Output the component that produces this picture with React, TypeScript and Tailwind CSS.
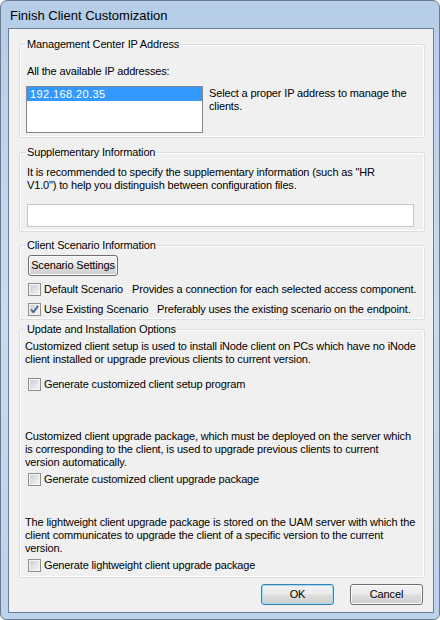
import type { ReactNode } from 'react';

function Group({ title, children, className = '' }: { title: string; children: ReactNode; className?: string }) {
  return (
    <fieldset
      className={`rounded-[3px] border border-[#d5dfe5] px-[6px] shadow-[inset_0_0_0_1px_#ffffff] ${className}`}
    >
      <legend className="ml-[0px] px-[1px] leading-[13px]">{title}</legend>
      {children}
    </fieldset>
  );
}

function Checkbox({ checked = false }: { checked?: boolean }) {
  return (
    <span className="flex h-[13px] w-[13px] shrink-0 items-center justify-center border border-[#8e8f8f] bg-gradient-to-br from-[#c9cdd2] to-[#f6f6f6] shadow-[inset_0_0_0_1px_#f4f4f4]">
      {checked && (
        <svg width="11" height="11" viewBox="0 0 11 11">
          <path d="M2 5.5 L4.3 8.2 L9 2" fill="none" stroke="#4a5f8f" strokeWidth="1.8" strokeLinejoin="round" />
        </svg>
      )}
    </span>
  );
}

function CheckRow({ label, checked, labelWidth, desc }: { label: string; checked?: boolean; labelWidth?: string; desc?: string }) {
  return (
    <div className="ml-[2px] flex h-[20px] items-center whitespace-nowrap">
      <Checkbox checked={checked} />
      <span className={`ml-[3px] ${labelWidth ?? ''}`}>{label}</span>
      {desc && <span>{desc}</span>}
    </div>
  );
}

function WinButton({ children, isDefault = false }: { children: ReactNode; isDefault?: boolean }) {
  return (
    <button
      className={`h-[21px] w-[73px] rounded-[3px] border bg-[linear-gradient(#f2f2f2,#ebebeb_48%,#dddddd_52%,#cfcfcf)] text-center leading-[19px] ${
        isDefault
          ? 'border-[#3c7fb1] shadow-[inset_0_0_0_1px_#9fdcf6]'
          : 'border-[#707070] shadow-[inset_0_0_0_1px_#fbfbfb]'
      }`}
    >
      {children}
    </button>
  );
}

export default function App() {
  return (
    <div
      className="flex h-[620px] w-[440px] flex-col overflow-hidden rounded-t-[7px] rounded-b-[6px] border border-[#6b7a8d] bg-gradient-to-b from-[#b6cde8] via-[#c9dbef] to-[#bcd1ea] text-[11px] leading-[13px] tracking-[-0.15px] text-black"
      style={{ fontFamily: '"Liberation Sans", Arial, sans-serif' }}
    >
      <div className="flex h-[27px] shrink-0 items-center pl-[9px] pt-[1px] text-[13px] tracking-normal">
        Finish Client Customization
      </div>

      <div className="mb-[6px] ml-[7px] mr-[5px] flex flex-1 flex-col border border-[#6e7f95] bg-[#f0f0f0] pl-[10px] pr-[8px]">
        <Group title="Management Center IP Address" className="mt-[9px] pb-[4px]">
          <div className="ml-[1px] pt-[14px]">All the available IP addresses:</div>
          <div className="mt-[8px] flex">
            <div className="h-[47px] w-[177px] shrink-0 border border-[#828790] bg-white p-[0px]">
              <div className="flex h-[14px] items-center bg-[#3399ff] pl-[3px] tracking-[0.4px] text-white">
                192.168.20.35
              </div>
            </div>
            <div className="ml-[6px] pt-[1px] whitespace-nowrap">
              Select a proper IP address to manage the
              <br />
              clients.
            </div>
          </div>
        </Group>

        <Group title="Supplementary Information" className="mt-[8px] pb-[4px]">
          <div className="ml-[1px] whitespace-nowrap pt-[7px]">
            It is recommended to specify the supplementary information (such as &quot;HR
            <br />
            V1.0&quot;) to help you distinguish between configuration files.
          </div>
          <div className="ml-[1px] mt-[12px] h-[23px] w-[387px] border border-[#c3c7cc] bg-white" />
        </Group>

        <Group title="Client Scenario Information" className="mt-[7px] pb-[0px]">
          <div className="ml-[2px] pt-[3px]">
            <button className="h-[21px] w-[90px] rounded-[3px] border border-[#707070] bg-[linear-gradient(#f2f2f2,#ebebeb_48%,#dddddd_52%,#cfcfcf)] leading-[19px] shadow-[inset_0_0_0_1px_#fbfbfb]">
              Scenario Settings
            </button>
          </div>
          <div className="mt-[3px]">
            <CheckRow
              label="Default Scenario"
              labelWidth="w-[88px]"
              desc="Provides a connection for each selected access component."
            />
            <CheckRow
              label="Use Existing Scenario"
              checked
              labelWidth="w-[113px]"
              desc="Preferably uses the existing scenario on the endpoint."
            />
          </div>
        </Group>

        <Group title="Update and Installation Options" className="mt-[3px] pb-[2px]">
          <div className="-ml-[1px] whitespace-nowrap pt-[4px]">
            Customized client setup is used to install iNode client on PCs which have no iNode
            <br />
            client installed or upgrade previous clients to current version.
          </div>
          <div className="mt-[8px]">
            <CheckRow label="Generate customized client setup program" />
          </div>
          <div className="-ml-[1px] mt-[36px] whitespace-nowrap">
            Customized client upgrade package, which must be deployed on the server which
            <br />
            is corresponding to the client, is used to upgrade previous clients to current
            <br />
            version automatically.
          </div>
          <CheckRow label="Generate customized client upgrade package" />
          <div className="-ml-[1px] mt-[27px] whitespace-nowrap">
            The lightweight client upgrade package is stored on the UAM server with which the
            <br />
            client communicates to upgrade the client of a specific version to the current
            <br />
            version.
          </div>
          <CheckRow label="Generate lightweight client upgrade package" />
        </Group>

        <div className="mr-[2px] mt-[6px] flex justify-end gap-[16px]">
          <WinButton isDefault>OK</WinButton>
          <WinButton>Cancel</WinButton>
        </div>
      </div>
    </div>
  );
}
